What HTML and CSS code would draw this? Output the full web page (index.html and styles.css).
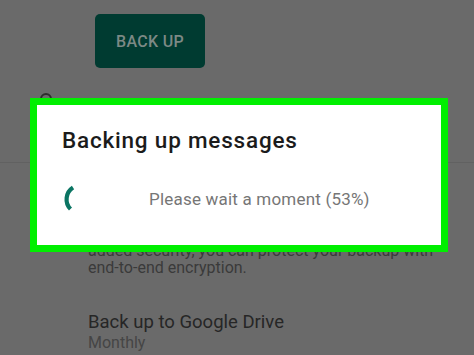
FILE: index.html
```html
<!DOCTYPE html>
<html>
<head>
<meta charset="utf-8">
<link rel="stylesheet" href="styles.css">
</head>
<body>
<div class="page">
  <div class="btn-row"><div class="btn">BACK UP</div></div>
  <div class="opt-row">
    <svg class="lock" width="16" height="16" viewBox="0 0 16 16"><path d="M3 9V7a5 5 0 0 1 10 0v2" fill="none" stroke="#2e2e2e" stroke-width="2"/></svg>
    <div class="opt-title">Back up end-to-end encrypted</div>
  </div>
  <div class="divider"></div>
  <div class="desc">
    <p>Messages and media are backed up. For</p>
    <p>added security, you can protect your backup with</p>
    <p>end-to-end encryption.</p>
  </div>
  <div class="setting">
    <div class="set-title">Back up to Google Drive</div>
    <div class="set-sub">Monthly</div>
  </div>
</div>
<div class="dialog">
  <div class="dlg-title">Backing up messages</div>
  <div class="dlg-body">
    <svg class="spinner" width="30" height="30" viewBox="0 0 30 30"><path d="M10 3.5 A14 14 0 0 0 7.5 25" fill="none" stroke="#0b7563" stroke-width="4.2"/></svg>
    <div class="dlg-text">Please wait a moment (53%)</div>
  </div>
</div>
</body>
</html>
```
FILE: styles.css
```css
html, body {
  margin: 0;
  padding: 0;
}
body {
  width: 474px;
  height: 355px;
  overflow: hidden;
  background: #6a6a6a;
  font-family: Roboto, "Liberation Sans", sans-serif;
  position: relative;
}
.page {
  display: flex;
  flex-direction: column;
}
.btn-row {
  padding: 14px 0 0 95px;
}
.btn {
  width: 110px;
  height: 54px;
  background: #003b31;
  border-radius: 5px;
  color: #7c8985;
  font-size: 16px;
  font-weight: 500;
  letter-spacing: 0.3px;
  display: flex;
  align-items: center;
  justify-content: center;
}
.opt-row {
  display: flex;
  align-items: flex-start;
  padding: 24px 0 0 38px;
  gap: 38px;
}
.opt-title {
  font-size: 18px;
  color: #2e2e2e;
  line-height: 22px;
  margin-top: 3px;
}
.divider {
  margin-top: 45px;
  height: 1px;
  background: #616161;
}
.desc {
  padding: 61px 0 0 88px;
  color: #3a3a3a;
  font-size: 16px;
  line-height: 17.5px;
}
.desc p {
  margin: 0;
}
.setting {
  padding: 34px 0 0 88px;
}
.set-title {
  font-size: 18.5px;
  color: #262626;
  line-height: 22px;
}
.set-sub {
  font-size: 16px;
  color: #454545;
  line-height: 20px;
  margin-top: 0;
}
.dialog {
  position: absolute;
  left: 30px;
  top: 98px;
  width: 404px;
  height: 140px;
  border: 7px solid #00ef00;
  background: #fff;
}
.dlg-title {
  padding: 22px 0 0 25px;
  font-size: 22.5px;
  font-weight: 500;
  letter-spacing: 0.8px;
  color: #1b1b1b;
  line-height: 26px;
}
.dlg-body {
  display: flex;
  align-items: center;
  padding: 31px 0 0 26px;
}
.spinner {
  flex: none;
}
.dlg-text {
  margin-left: 56px;
  font-size: 17px;
  letter-spacing: 0.2px;
  color: #767676;
}
```
